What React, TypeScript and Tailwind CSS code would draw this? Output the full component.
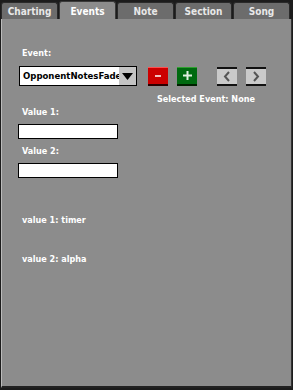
const tabs = ['Charting', 'Events', 'Note', 'Section', 'Song'];

function Tab({ label, active }: { label: string; active: boolean }) {
  return (
    <div
      className={
        active
          ? 'flex h-[20px] w-[57px] items-center justify-center rounded-t-[3px] border-x border-t border-[#3a3a3a] bg-[#8c8c8c] text-[10px] font-bold text-white'
          : 'mt-[1px] flex h-[18px] w-[57px] items-center justify-center rounded-t-[3px] border-x border-t border-[#2a2a2a] bg-[#6c6c6c] text-[10px] font-bold text-[#e8e8e8]'
      }
    >
      {label}
    </div>
  );
}

export default function App() {
  return (
    <div
      className="flex h-[390px] w-[293px] flex-col bg-[#1c1c1c]"
      style={{ fontFamily: '"DejaVu Sans Condensed", "DejaVu Sans", sans-serif' }}
    >
      <div className="flex h-[19px] gap-[1px] pl-[1px] pt-[1px]">
        {tabs.map((t) => (
          <Tab key={t} label={t} active={t === 'Events'} />
        ))}
      </div>
      <div className="mb-[2px] ml-[1px] mr-[1px] flex flex-1 flex-col border-b-2 border-l border-r border-b-[#222] border-l-[#bbb] border-r-[#333] bg-[#8c8c8c] pl-[16px] text-[9px] font-bold leading-[12px] text-white">
        <div className="mt-[28px] pl-[4px]">Event:</div>
        <div className="mt-[7px] flex items-center">
          <div className="ml-[1px] flex h-[20px] w-[118px] items-center border border-black bg-white">
            <div className="flex-1 overflow-hidden whitespace-nowrap pl-[3px] text-[9.5px] text-black">
              OpponentNotesFade
            </div>
            <div className="flex h-[18px] w-[17px] items-center justify-center bg-[#c4c4c4]">
              <svg width="11" height="7" viewBox="0 0 11 7">
                <path d="M0 0 H11 L5.5 7 Z" fill="#000" />
              </svg>
            </div>
          </div>
          <div className="ml-[11px] flex h-[19px] w-[20px] items-center justify-center border-b-2 border-t border-b-[#2a0000] border-t-[#ff5050] bg-[#cc0000]">
            <div className="h-[2px] w-[6px] bg-[#f0c0c0]" />
          </div>
          <div className="ml-[9px] flex h-[19px] w-[20px] items-center justify-center border-b-2 border-t border-b-[#002000] border-t-[#30a030] bg-[#006a10]">
            <svg width="9" height="9" viewBox="0 0 9 9">
              <path d="M3.5 0 H5.5 V3.5 H9 V5.5 H5.5 V9 H3.5 V5.5 H0 V3.5 H3.5 Z" fill="#e0f0e0" />
            </svg>
          </div>
          <div className="ml-[20px] flex h-[19px] w-[20px] items-center justify-center border-b-2 border-t-2 border-b-[#111] border-t-[#111] bg-[#cacaca]">
            <svg width="8" height="11" viewBox="0 0 8 11">
              <path d="M6 1 L2 5.5 L6 10" stroke="#555" strokeWidth="2" fill="none" />
            </svg>
          </div>
          <div className="ml-[9px] flex h-[19px] w-[20px] items-center justify-center border-b-2 border-t-2 border-b-[#111] border-t-[#111] bg-[#cacaca]">
            <svg width="8" height="11" viewBox="0 0 8 11">
              <path d="M2 1 L6 5.5 L2 10" stroke="#555" strokeWidth="2" fill="none" />
            </svg>
          </div>
        </div>
        <div className="ml-[139px] mt-[7px] whitespace-nowrap">Selected Event: None</div>
        <div className="mt-[1px] pl-[4px]">Value 1:</div>
        <div className="mt-[6px] h-[15px] w-[100px] border border-black bg-white" />
        <div className="mt-[6px] pl-[4px]">Value 2:</div>
        <div className="mt-[6px] h-[15px] w-[100px] border border-black bg-white" />
        <div className="mt-[36px] pl-[4px]">value 1: timer</div>
        <div className="mt-[27px] pl-[4px]">value 2: alpha</div>
      </div>
    </div>
  );
}
